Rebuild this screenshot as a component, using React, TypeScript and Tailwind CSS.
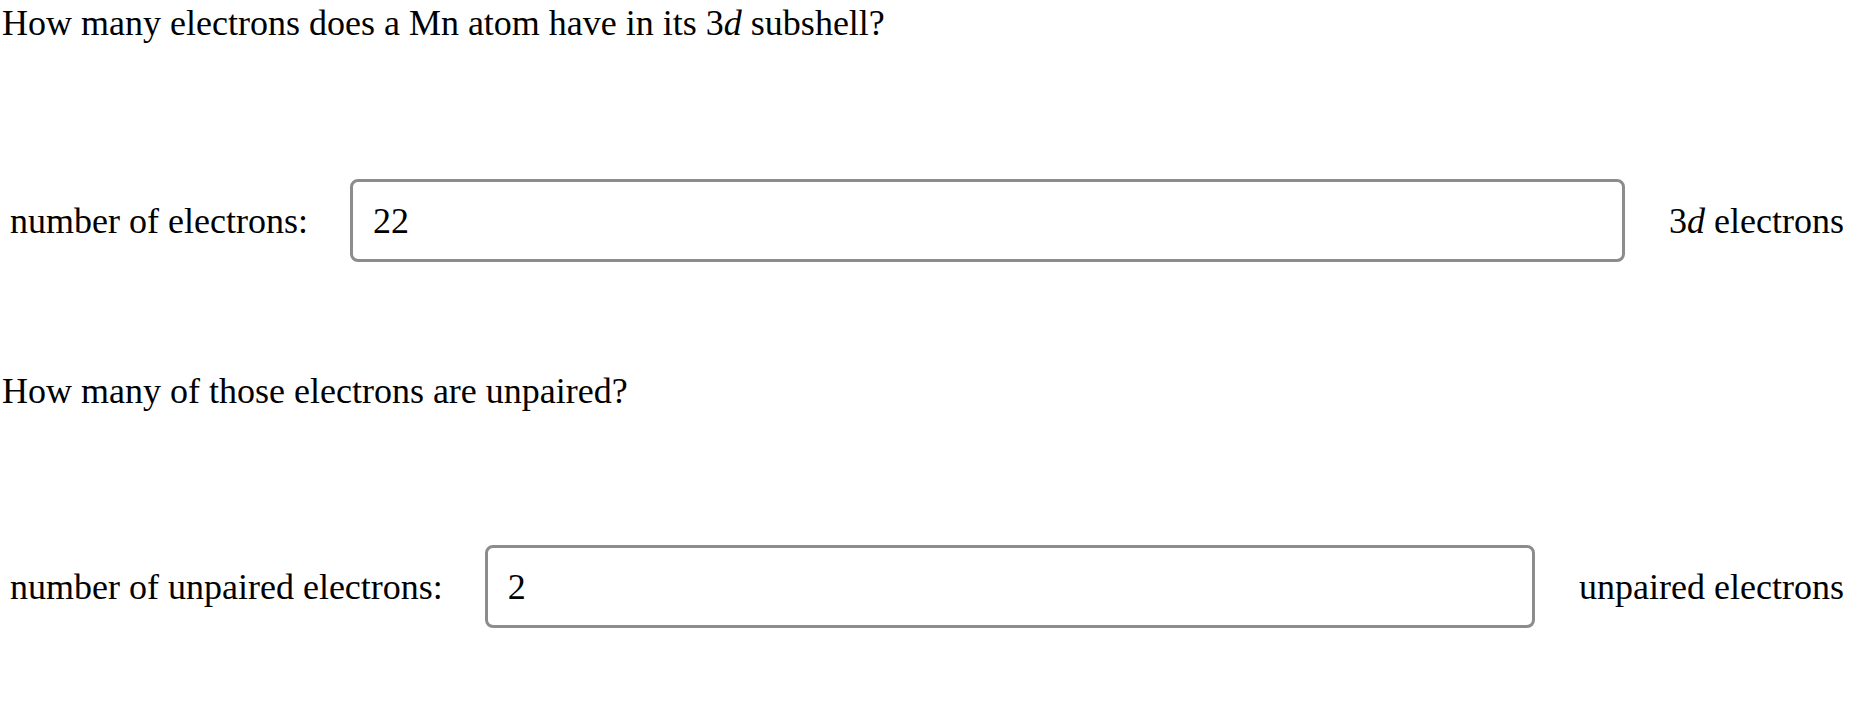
import React from 'react'

// one answer line: label, text field, unit
function AnswerRow({ label, value, unit, className }: {
  label: string; value: string; unit: React.ReactNode; className?: string
}) {
  return (
    <div className={`flex items-center pl-[10px] pr-[14px] ${className ?? ''}`}>
      <label className="whitespace-nowrap mr-[42px]">{label}</label>
      <input
        type="text"
        defaultValue={value}
        className="flex-1 min-w-0 h-[83px] border-[3px] border-[#8c8c8c] rounded-[8px] pl-[20px] pr-2 bg-white text-black outline-none"
        style={{ font: 'inherit' }}
      />
      <span className="whitespace-nowrap ml-[44px]">{unit}</span>
    </div>
  )
}

export default function App() {
  return (
    <div className="min-h-screen bg-white text-black text-[36px] leading-[40px] font-['Liberation_Serif','Times_New_Roman',serif]">
      <p className="pt-[3px] pl-[2px]">
        How many electrons does a Mn atom have in its 3<i>d</i> subshell?
      </p>
      <AnswerRow
        className="mt-[136px]"
        label="number of electrons:"
        value="22"
        unit={<>3<i>d</i> electrons</>}
      />

      <p className="mt-[109px] pl-[2px]">How many of those electrons are unpaired?</p>
      <AnswerRow
        className="mt-[134px]"
        label="number of unpaired electrons:"
        value="2"
        unit="unpaired electrons"
      />
    </div>
  )
}
